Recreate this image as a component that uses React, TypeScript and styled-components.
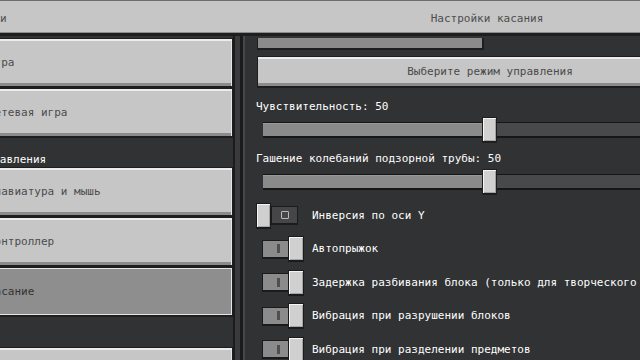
import styled, { createGlobalStyle } from "styled-components";

const GlobalStyle = createGlobalStyle`
  html, body {
    margin: 0;
    padding: 0;
    background: #313233;
    overflow: hidden;
  }
`;

const Screen = styled.div`
  width: 640px;
  height: 360px;
  overflow: hidden;
  background: #313233;
  display: flex;
  flex-direction: column;
  font-family: "DejaVu Sans Mono", "Liberation Mono", monospace;
  font-size: 11px;
  white-space: nowrap;
`;

const Header = styled.header`
  flex: none;
  box-sizing: border-box;
  height: 36px;
  padding-top: 2px;
  background: #c6c6c6;
  border-top: 1px solid #6e6e6e;
  border-bottom: 3px solid #1e1e1f;
  box-shadow: inset 0 -1px 0 #8b8b8b;
  display: grid;
  grid-template-columns: 245px 490px;
  align-items: center;
  color: #4e4e4e;
`;

const HeaderBack = styled.span`
  margin-left: -53px;
`;

const HeaderTitle = styled.span`
  text-align: center;
  padding-right: 6px;
`;

const Body = styled.div`
  flex: 1;
  min-height: 0;
  display: grid;
  grid-template-columns: 233px 12px 490px;
`;

const NavColumn = styled.nav`
  display: flex;
  flex-direction: column;
  padding-top: 2px;
  overflow: hidden;
`;

const NavButton = styled.div<{ $selected?: boolean }>`
  flex: none;
  box-sizing: border-box;
  height: 50px;
  margin-left: -20px;
  padding-left: 7px;
  display: flex;
  align-items: center;
  background: ${(p) => (p.$selected ? "#8e8e8e" : "#c6c6c6")};
  color: ${(p) => (p.$selected ? "#333333" : "#4c4c4c")};
  border: 1px solid #1e1e1f;
  border-bottom-width: 2px;
  box-shadow: ${(p) =>
    p.$selected
      ? "inset 0 0 0 1px #e4e4e4"
      : "inset 0 2px 0 #ececec, inset -1px 0 0 #e4e4e4, inset 0 -3px 0 #8b8b8b"};
`;

const SectionLabel = styled.div<{ $height: number }>`
  flex: none;
  box-sizing: border-box;
  height: ${(p) => p.$height}px;
  margin-left: -20px;
  padding-top: 14px;
  line-height: 15px;
  color: #ffffff;
`;

const Divider = styled.div`
  background: linear-gradient(
    to right,
    #1b1b1c 0 2px,
    #3a3a3c 2px 7px,
    #1b1b1c 7px 10px,
    #48484a 10px 12px
  );
`;

const Content = styled.section`
  display: flex;
  flex-direction: column;
  padding: 2px 12px 0;
  overflow: hidden;
  color: #ffffff;
`;

const TopBar = styled.div`
  flex: none;
  box-sizing: border-box;
  width: 227px;
  height: 12px;
  background: #8b8b8b;
  border: 0 solid #1e1e1f;
  border-width: 0 2px 2px 1px;
`;

const WideButton = styled.div`
  flex: none;
  box-sizing: border-box;
  height: 32px;
  margin-top: 6px;
  display: flex;
  align-items: center;
  justify-content: center;
  background: #c6c6c6;
  color: #4a4a4a;
  border: 1px solid #1e1e1f;
  border-bottom-width: 2px;
  box-shadow: inset 0 2px 0 #ececec, inset 0 -3px 0 #8b8b8b;
`;

const SettingLabel = styled.div<{ $gap: number }>`
  flex: none;
  margin-top: ${(p) => p.$gap}px;
  line-height: 16px;
  margin-left: -1px;
`;

const SliderRow = styled.div`
  flex: none;
  height: 26px;
  margin-top: 2px;
  padding: 0 6px;
  display: flex;
  align-items: center;
`;

const Track = styled.div`
  position: relative;
  flex: 1;
  box-sizing: border-box;
  height: 16px;
  display: flex;
  border-top: 1px solid #161617;
  border-bottom: 2px solid #161617;
`;

const Fill = styled.div`
  background: #8a8a8a;
  box-shadow: inset 0 1px 0 #9a9a9a;
`;

const Rest = styled.div`
  flex: 1;
  background: #48494b;
`;

const Thumb = styled.div`
  position: absolute;
  top: -6px;
  box-sizing: border-box;
  width: 15px;
  height: 26px;
  margin-left: -8px;
  background: #d0d0d0;
  border: 1px solid #1e1e1f;
  border-bottom-width: 2px;
  box-shadow: inset 1px 1px 0 #f4f4f4, inset -1px -1px 0 #a3a3a3;
`;

const ToggleList = styled.div`
  flex: none;
  margin-top: 4px;
  display: flex;
  flex-direction: column;
`;

const ToggleRow = styled.div`
  height: 33.5px;
  margin-left: -1px;
  display: flex;
  align-items: center;
  gap: 8px;
`;

const ToggleBox = styled.div<{ $on: boolean }>`
  flex: none;
  width: 48px;
  display: flex;
  align-items: center;
  flex-direction: ${(p) => (p.$on ? "row" : "row-reverse")};
  justify-content: flex-end;
`;

const ToggleTrack = styled.div<{ $on: boolean }>`
  box-sizing: border-box;
  width: ${(p) => (p.$on ? 28 : 27)}px;
  height: 19px;
  display: flex;
  align-items: center;
  justify-content: center;
  background: ${(p) => (p.$on ? "#8b8b8b" : "#464648")};
  border: 1px solid #1b1b1c;
  border-bottom-width: 2px;
  padding-left: ${(p) => (p.$on ? 4 : 0)}px;
`;

const OnMark = styled.div`
  width: 3px;
  height: 9px;
  background: #4f4f4f;
`;

const OffMark = styled.div`
  box-sizing: border-box;
  width: 8px;
  height: 8px;
  border: 1px solid #b8b8b8;
  border-radius: 1px;
`;

const Knob = styled.div<{ $on: boolean }>`
  position: relative;
  z-index: 1;
  box-sizing: border-box;
  width: ${(p) => (p.$on ? 16 : 15)}px;
  height: 26px;
  margin-left: ${(p) => (p.$on ? -2 : 0)}px;
  background: #d0d0d0;
  border: 1px solid #1b1b1c;
  border-bottom-width: 2px;
  box-shadow: inset 1px 1px 0 #f5f5f5, inset -1px -1px 0 #a5a5a5;
`;

const ToggleText = styled.span`
  line-height: 16px;
`;

function Slider({ value }: { value: number }) {
  return (
    <SliderRow>
      <Track>
        <Fill style={{ width: `${value}%` }} />
        <Rest />
        <Thumb style={{ left: `${value}%` }} />
      </Track>
    </SliderRow>
  );
}

function Toggle({ on, label }: { on: boolean; label: string }) {
  return (
    <ToggleRow>
      <ToggleBox $on={on}>
        <ToggleTrack $on={on}>{on ? <OnMark /> : <OffMark />}</ToggleTrack>
        <Knob $on={on} />
      </ToggleBox>
      <ToggleText>{label}</ToggleText>
    </ToggleRow>
  );
}

const toggles = [
  { on: false, label: "Инверсия по оси Y" },
  { on: true, label: "Автопрыжок" },
  { on: true, label: "Задержка разбивания блока (только для творческого режима)" },
  { on: true, label: "Вибрация при разрушении блоков" },
  { on: true, label: "Вибрация при разделении предметов" },
];

export default function App() {
  return (
    <>
      <GlobalStyle />
      <Screen>
        <Header>
          <HeaderBack>Настройки</HeaderBack>
          <HeaderTitle>Настройки касания</HeaderTitle>
        </Header>
        <Body>
          <NavColumn>
            <NavButton>Игра</NavButton>
            <NavButton>Сетевая игра</NavButton>
            <SectionLabel $height={29}>Управления</SectionLabel>
            <NavButton>Клавиатура и мышь</NavButton>
            <NavButton>Контроллер</NavButton>
            <NavButton $selected>Касание</NavButton>
            <SectionLabel $height={30} />
            <NavButton>Общее</NavButton>
          </NavColumn>
          <Divider />
          <Content>
            <TopBar />
            <WideButton>Выберите режим управления</WideButton>
            <SettingLabel $gap={11}>Чувствительность: 50</SettingLabel>
            <Slider value={50} />
            <SettingLabel $gap={8}>Гашение колебаний подзорной трубы: 50</SettingLabel>
            <Slider value={50} />
            <ToggleList>
              {toggles.map((t) => (
                <Toggle key={t.label} on={t.on} label={t.label} />
              ))}
            </ToggleList>
          </Content>
        </Body>
      </Screen>
    </>
  );
}
